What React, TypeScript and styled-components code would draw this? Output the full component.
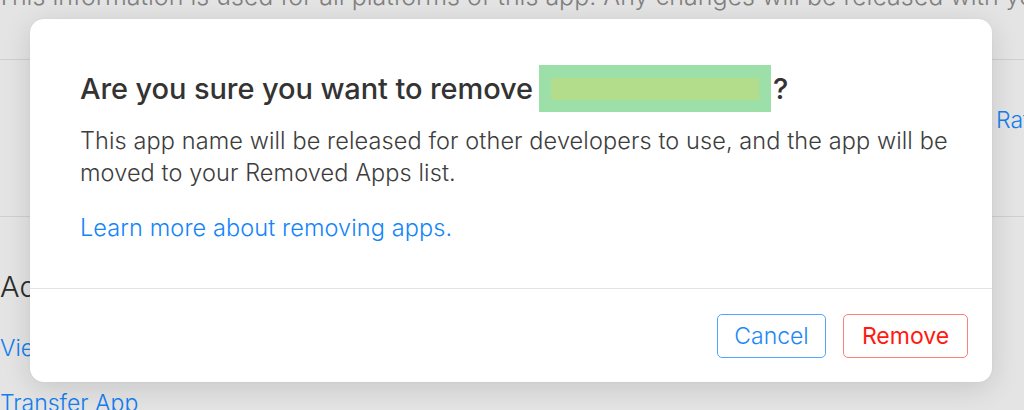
import React from "react";
import styled, { createGlobalStyle } from "styled-components";

const GlobalStyle = createGlobalStyle`
  html, body {
    margin: 0;
    padding: 0;
    width: 1024px;
    height: 410px;
    overflow: hidden;
    background: #e4e4e4;
  }
  body {
    font-family: Inter, "Noto Sans", "Liberation Sans", sans-serif;
    -webkit-font-smoothing: antialiased;
  }
  * { box-sizing: border-box; }
`;

const Page = styled.div`
  position: relative;
  width: 1024px;
  height: 410px;
  overflow: hidden;
  background: #e4e4e4;
`;

/* ---------- dimmed page behind the dialog ---------- */
const Backdrop = styled.div`
  display: flex;
  flex-direction: column;
`;

const IntroText = styled.p`
  margin: -19px 0 0 -4px;
  font-size: 25px;
  line-height: 30px;
  font-weight: 300;
  color: #808080;
  white-space: nowrap;
`;

const Rule = styled.div<{ $top: number }>`
  margin-top: ${(p) => p.$top}px;
  height: 1px;
  background: #cfcfcf;
`;

const RightRow = styled.div`
  display: flex;
  padding-left: 996px;
  margin-top: 45px;
  height: 30px;
  align-items: center;
`;

const BgLink = styled.span`
  font-size: 23px;
  line-height: 30px;
  font-weight: 300;
  color: #137ef0;
  white-space: nowrap;
`;

const BgHeading = styled.h2`
  margin: 53px 0 0 0;
  font-size: 29px;
  line-height: 34px;
  font-weight: 300;
  color: #2b2b2b;
  white-space: nowrap;
`;

const BgLinkRow = styled.div<{ $top: number }>`
  margin-top: ${(p) => p.$top}px;
  height: 30px;
`;

/* ---------- dialog ---------- */
const Dialog = styled.div`
  position: absolute;
  top: 19px;
  left: 30px;
  width: 962px;
  height: 363px;
  background: #ffffff;
  border-radius: 14px;
  box-shadow: 0 6px 28px rgba(0, 0, 0, 0.13), 0 0 2px rgba(0, 0, 0, 0.05);
  display: flex;
  flex-direction: column;
`;

const DialogBody = styled.div`
  flex: 1;
  padding: 46px 50px 0 50px;
`;

const Title = styled.h1`
  margin: 0;
  display: flex;
  align-items: center;
  height: 47px;
  font-size: 29px;
  font-weight: 500;
  color: #333333;
  letter-spacing: -0.1px;
  white-space: nowrap;
`;

const Redacted = styled.span`
  display: inline-flex;
  margin-left: 6px;
  width: 232px;
  height: 47px;
  padding: 13px 12px 12px 12px;
  background: #9cdfa9;
`;

const RedactedInner = styled.span`
  flex: 1;
  background: #b3dc8b;
`;

const Question = styled.span`
  margin-left: 2px;
`;

const Text = styled.p<{ $top: number; $link?: boolean }>`
  margin: ${(p) => p.$top}px 0 0 0;
  font-size: 23.5px;
  line-height: 32px;
  font-weight: 300;
  letter-spacing: 0.1px;
  white-space: nowrap;
  color: ${(p) => (p.$link ? "#1485f9" : "#3d3d3d")};
  cursor: ${(p) => (p.$link ? "pointer" : "auto")};
`;

const Footer = styled.div`
  border-top: 1px solid #e3e3e3;
  padding: 25px 24px 24px 24px;
  display: flex;
  justify-content: flex-end;
  gap: 17px;
`;

const Button = styled.button<{ $tone: "blue" | "red"; $w: number }>`
  width: ${(p) => p.$w}px;
  height: 44px;
  border-radius: 5px;
  background: #ffffff;
  font-family: inherit;
  font-size: 23px;
  font-weight: ${(p) => (p.$tone === "blue" ? 300 : 400)};
  border: 1px solid ${(p) => (p.$tone === "blue" ? "#55a6fb" : "#ff7f79")};
  color: ${(p) => (p.$tone === "blue" ? "#2088f6" : "#ff1a0f")};
  display: flex;
  align-items: center;
  justify-content: center;
  padding: 0;
`;

export default function App() {
  return (
    <Page>
      <GlobalStyle />
      <Backdrop>
        <IntroText>
          This information is used for all platforms of this app. Any changes will be released with your next app version.
        </IntroText>
        <Rule $top={48} />
        <RightRow>
          <BgLink>Rating</BgLink>
        </RightRow>
        <Rule $top={81} />
        <BgHeading>Additional Information</BgHeading>
        <BgLinkRow $top={29}>
          <BgLink>View on App Store</BgLink>
        </BgLinkRow>
        <BgLinkRow $top={25}>
          <BgLink>Transfer App</BgLink>
        </BgLinkRow>
      </Backdrop>

      <Dialog role="dialog">
        <DialogBody>
          <Title>
            Are you sure you want to remove
            <Redacted>
              <RedactedInner />
            </Redacted>
            <Question>?</Question>
          </Title>
          <Text $top={13}>
            This app name will be released for other developers to use, and the app will be
            <br />
            moved to your Removed Apps list.
          </Text>
          <Text $top={23} $link>
            Learn more about removing apps.
          </Text>
        </DialogBody>
        <Footer>
          <Button $tone="blue" $w={109}>Cancel</Button>
          <Button $tone="red" $w={125}>Remove</Button>
        </Footer>
      </Dialog>
    </Page>
  );
}
